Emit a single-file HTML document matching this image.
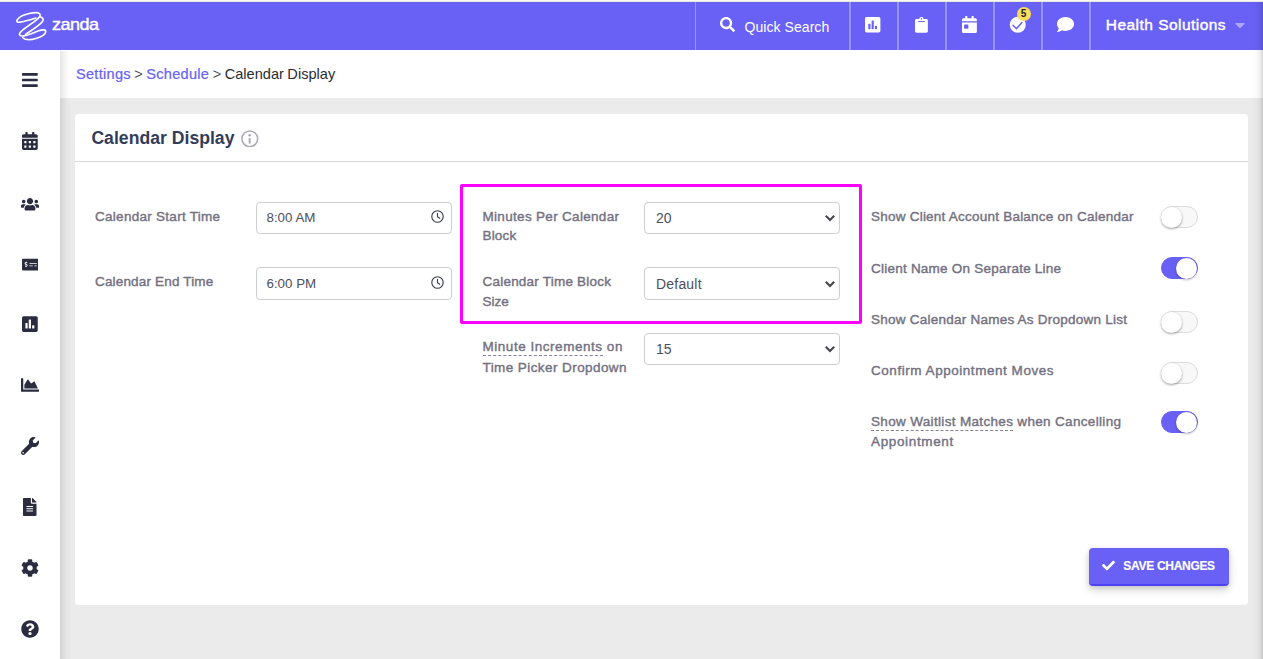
<!DOCTYPE html>
<html lang="en">
<head>
<meta charset="utf-8">
<title>Calendar Display - Zanda</title>
<style>
*{box-sizing:border-box;margin:0;padding:0}
html,body{width:1263px;height:659px;overflow:hidden}
body{position:relative;background:#ebebeb;font-family:"Liberation Sans",sans-serif;color:#6e6b7b}
.abs{position:absolute}
#topstrip{left:0;top:0;width:1263px;height:2px;background:linear-gradient(#fbfaf5 0,#fbfaf5 1px,#eae7db 1px,#eae7db 2px)}
#header{left:0;top:2px;width:1263px;height:48px;background:#6961f5}
.sep{top:0;width:1px;height:48px;background:rgba(255,255,255,.31)}
.hicon{fill:#fff}
#brand{left:52px;top:11.2px;font-size:17px;line-height:24px;color:#fff;letter-spacing:-.5px;-webkit-text-stroke:.4px #fff;transform:scaleX(1.06);transform-origin:0 0}
#qs{left:744.5px;top:14px;font-size:14px;line-height:22px;color:#fff;white-space:nowrap;letter-spacing:.06px}
#org{left:1105.8px;top:10.6px;font-size:15.5px;line-height:24px;font-weight:400;color:#fff;-webkit-text-stroke:.42px #fff;white-space:nowrap;letter-spacing:.46px}
#badge{left:1016.9px;top:4.9px;width:14.2px;height:14px;border-radius:50%;background:#fadd5a;color:#25253a;font-size:10px;font-weight:700;line-height:13.8px;text-align:center;padding-right:.9px}
#sidebar{left:0;top:50px;width:60px;height:609px;background:#fff}
.sicon{fill:#2b2c40}
#crumbbar{left:60px;top:50px;width:1203px;height:48px;background:#fff}
#crumb{left:76px;top:62px;font-size:14.6px;line-height:24px;color:#2b2b33;white-space:nowrap;letter-spacing:0;word-spacing:-.6px}
#crumb a{color:#6961f5;text-decoration:none;letter-spacing:.26px;-webkit-text-stroke:.22px #6961f5}
#crumb i{font-style:normal;color:#50505a}
#lshadow{left:60px;top:51px;width:10px;height:608px;background:linear-gradient(to right,rgba(0,0,0,.10),rgba(0,0,0,.03) 60%,rgba(0,0,0,0))}
#rshadow{left:1251px;top:2px;width:12px;height:657px;background:linear-gradient(to right,rgba(0,0,0,0),rgba(0,0,0,.02) 45%,rgba(0,0,0,.06) 75%,rgba(0,0,0,.16))}
#card{left:75px;top:114px;width:1173px;height:491px;background:#fff;border-radius:4px}
#cardline{left:75px;top:161px;width:1173px;height:1px;background:#d6d6de}
#title{left:91.4px;top:125px;font-size:17.6px;line-height:26px;font-weight:700;color:#323c5a;white-space:nowrap;letter-spacing:.02px}
.lbl{font-size:13.5px;line-height:19.5px;font-weight:400;color:#737181;-webkit-text-stroke:.4px #737181;white-space:nowrap}
.dash{border-bottom:1px dashed #858392;padding-bottom:1px}
.inp{height:32px;border:1px solid #cdcdd6;border-radius:4px;background:#fff}
.inptxt{font-size:13.33px;line-height:16px;color:#4b4f5e;white-space:nowrap}
.seltxt{font-size:14px;line-height:20px;color:#4b4f5e;white-space:nowrap}
.tog{width:37px;height:22px;border-radius:11px}
.tog.off{background:#f8f8f8;border:1px solid #dcdcdc}
.tog.on{background:#6961f5;border:1px solid #6961f5}
.knob{position:absolute;top:-.5px;width:21px;height:21px;border-radius:50%;background:#fff;box-shadow:0 1px 2.5px rgba(0,0,0,.38)}
.tog.off .knob{left:-.8px}
.tog.on .knob{right:-.3px;box-shadow:0 1px 2.5px rgba(0,0,0,.3)}
#hl{left:460px;top:184px;width:402px;height:140px;border:3px solid #ff00ff;border-radius:2px}
#save{left:1089px;top:548px;width:140px;height:38px;background:#6961f5;border-bottom:2px solid #4c42f2;border-radius:4px;box-shadow:0 4px 10px rgba(0,0,0,.16),0 2px 4px rgba(0,0,0,.10)}
#savetxt{left:1123.3px;top:557px;font-size:12px;line-height:18px;font-weight:700;color:#fff;-webkit-text-stroke:.15px #fff;white-space:nowrap;letter-spacing:-.3px}
</style>
</head>
<body>
<div id="topstrip" class="abs"></div>
<div id="header" class="abs">
  <svg class="abs" style="left:12px;top:5px" width="40" height="38" viewBox="12 7 40 38" fill="none" stroke="#fff" stroke-width="1.8" stroke-linecap="round" stroke-linejoin="round">
    <g transform="translate(31.5 26) scale(.94 .91) translate(-31.5 -25.5)"><path d="M36.1 16.8C32 18.2 25 20.4 19.5 21.3C16.5 21.8 15.2 20.6 16.2 18.8C18 15.8 24 13 29 11.8C33.5 10.7 38.5 10.2 40.2 12C41.8 13.8 39.5 16.5 36.5 19C31 23.5 23 28.5 20 32C17.8 34.6 18.3 36.4 21.5 36.5C26 36.6 33 33 39 30.8C43.5 29.2 46.8 29.3 46.6 31.8C46.3 34.6 42 37.3 37 39C32 40.7 25.5 41.6 22.1 38.4"/>
    <path d="M40.9 15.3C43.3 16.2 44.6 18 43.4 20.2C41.2 24.2 31.5 30.3 25.2 34.7"/></g>
  </svg>
  <div id="brand" class="abs">zanda</div>
  <div class="sep abs" style="left:695px"></div>
  <div class="sep abs" style="left:849px;width:2px"></div>
  <div class="sep abs" style="left:897px;width:2px"></div>
  <div class="sep abs" style="left:945px;width:2px"></div>
  <div class="sep abs" style="left:993px;width:2px"></div>
  <div class="sep abs" style="left:1041px;width:2px"></div>
  <div class="sep abs" style="left:1089px;width:2px"></div>
  <!-- search -->
  <svg class="abs hicon" style="left:720px;top:15px" width="15" height="15" viewBox="0 0 512 512"><path d="M505 442.700L405.300 343c-4.500-4.500-10.600-7-17-7H372c27.600-35.300 44-79.700 44-128C416 93.100 322.900 0 208 0S0 93.100 0 208s93.100 208 208 208c48.300 0 92.700-16.400 128-44v16.300c0 6.400 2.500 12.500 7 17l99.700 99.700c9.400 9.400 24.600 9.400 33.900 0l28.300-28.300c9.400-9.400 9.400-24.600.1-34zM208 336c-70.700 0-128-57.200-128-128 0-70.700 57.200-128 128-128 70.700 0 128 57.200 128 128 0 70.700-57.200 128-128 128z"/></svg>
  <div id="qs" class="abs">Quick Search</div>
  <!-- poll -->
  <svg class="abs hicon" style="left:865.3px;top:13.8px" width="15.4" height="17.5" preserveAspectRatio="none" viewBox="0 0 448 512"><path d="M400 32H48C21.500 32 0 53.500 0 80v352c0 26.500 21.500 48 48 48h352c26.500 0 48-21.500 48-48V80c0-26.500-21.500-48-48-48zM160 368c0 8.840-7.160 16-16 16h-32c-8.840 0-16-7.160-16-16V240c0-8.840 7.160-16 16-16h32c8.840 0 16 7.160 16 16v128zm96 0c0 8.840-7.160 16-16 16h-32c-8.840 0-16-7.160-16-16V144c0-8.840 7.160-16 16-16h32c8.840 0 16 7.160 16 16v224zm96 0c0 8.840-7.160 16-16 16h-32c-8.840 0-16-7.160-16-16v-64c0-8.840 7.160-16 16-16h32c8.840 0 16 7.160 16 16v64z"/></svg>
  <!-- clipboard -->
  <svg class="abs hicon" style="left:915.3px;top:15.1px" width="12.9" height="15.8" preserveAspectRatio="none" viewBox="0 0 384 512"><path d="M384 112v352c0 26.510-21.490 48-48 48H48c-26.510 0-48-21.490-48-48V112c0-26.510 21.490-48 48-48h80c0-35.290 28.710-64 64-64s64 28.710 64 64h80c26.510 0 48 21.490 48 48zM192 40c-13.255 0-24 10.745-24 24s10.745 24 24 24 24-10.745 24-24-10.745-24-24-24m96 114v-20a6 6 0 0 0-6-6H102a6 6 0 0 0-6 6v20a6 6 0 0 0 6 6h180a6 6 0 0 0 6-6z"/></svg>
  <!-- calendar-day -->
  <svg class="abs hicon" style="left:962px;top:14px" width="14.875" height="17" viewBox="0 0 448 512"><path d="M0 464c0 26.500 21.500 48 48 48h352c26.500 0 48-21.500 48-48V192H0v272zm64-192c0-8.800 7.200-16 16-16h96c8.800 0 16 7.200 16 16v96c0 8.800-7.200 16-16 16H80c-8.800 0-16-7.200-16-16v-96zM400 64h-48V16c0-8.800-7.200-16-16-16h-32c-8.800 0-16 7.200-16 16v48H160V16c0-8.800-7.200-16-16-16h-32c-8.800 0-16 7.200-16 16v48H48C21.500 64 0 85.500 0 112v48h448v-48c0-26.500-21.500-48-48-48z"/></svg>
  <!-- check-circle -->
  <svg class="abs" style="left:1008px;top:13px" width="20" height="20" viewBox="1008 15 20 20"><circle cx="1017.75" cy="24.85" r="8" fill="#fff"/><path d="M1013 25.300l3.400 3.400 5.500-6.200" fill="none" stroke="#6961f5" stroke-width="1.5" stroke-linecap="round" stroke-linejoin="round"/></svg>
  <div id="badge" class="abs">5</div>
  <!-- comment -->
  <svg class="abs hicon" style="left:1057px;top:14.3px" width="17" height="17" viewBox="0 0 512 512"><path d="M256 32C114.600 32 0 125.100 0 240c0 49.600 21.400 95 57 130.700C44.500 421.100 2.700 466 2.200 466.500c-2.200 2.300-2.800 5.700-1.500 8.700S4.800 480 8 480c66.300 0 116-31.800 140.600-51.400 32.700 12.300 69 19.400 107.400 19.400 141.400 0 256-93.100 256-208S397.400 32 256 32z"/></svg>
  <div id="org" class="abs">Health Solutions</div>
  <svg class="abs" style="left:1235px;top:15.3px" width="10" height="16" viewBox="0 0 320 512" fill="rgba(255,255,255,.45)"><path d="M31.300 192h257.300c17.800 0 26.700 21.500 14.100 34.100L174.100 354.800c-7.800 7.800-20.500 7.800-28.300 0L17.200 226.100C4.600 213.500 13.500 192 31.300 192z"/></svg>
</div>

<div id="sidebar" class="abs"></div>
<div id="crumbbar" class="abs"></div>
<div id="crumb" class="abs"><a>Settings</a> <i>&gt;</i> <a>Schedule</a> <i>&gt;</i> Calendar Display</div>
<div id="card" class="abs"></div>
<div id="cardline" class="abs"></div>
<div id="lshadow" class="abs"></div>
<div id="rshadow" class="abs"></div>
<!-- sidebar icons -->
<svg class="abs sicon" style="left:22.1px;top:71.3px" width="15.75" height="18" viewBox="0 0 448 512"><path d="M16 132h416c8.837 0 16-7.163 16-16V76c0-8.837-7.163-16-16-16H16C7.163 60 0 67.163 0 76v40c0 8.837 7.163 16 16 16zm0 160h416c8.837 0 16-7.163 16-16v-40c0-8.837-7.163-16-16-16H16c-8.837 0-16 7.163-16 16v40c0 8.837 7.163 16 16 16zm0 160h416c8.837 0 16-7.163 16-16v-40c0-8.837-7.163-16-16-16H16c-8.837 0-16 7.163-16 16v40c0 8.837 7.163 16 16 16z"/></svg>
<svg class="abs sicon" style="left:22.1px;top:132px" width="15.75" height="18" viewBox="0 0 448 512"><path d="M0 464c0 26.500 21.500 48 48 48h352c26.500 0 48-21.500 48-48V192H0v272zm320-196c0-6.600 5.400-12 12-12h40c6.600 0 12 5.400 12 12v40c0 6.600-5.400 12-12 12h-40c-6.600 0-12-5.400-12-12v-40zm0 128c0-6.600 5.400-12 12-12h40c6.600 0 12 5.400 12 12v40c0 6.600-5.400 12-12 12h-40c-6.600 0-12-5.400-12-12v-40zM192 268c0-6.600 5.400-12 12-12h40c6.600 0 12 5.400 12 12v40c0 6.600-5.400 12-12 12h-40c-6.600 0-12-5.400-12-12v-40zm0 128c0-6.600 5.400-12 12-12h40c6.600 0 12 5.400 12 12v40c0 6.600-5.400 12-12 12h-40c-6.600 0-12-5.400-12-12v-40zM64 268c0-6.600 5.400-12 12-12h40c6.600 0 12 5.400 12 12v40c0 6.600-5.400 12-12 12H76c-6.600 0-12-5.400-12-12v-40zm0 128c0-6.600 5.400-12 12-12h40c6.600 0 12 5.400 12 12v40c0 6.600-5.400 12-12 12H76c-6.600 0-12-5.400-12-12v-40zM400 64h-48V16c0-8.800-7.200-16-16-16h-32c-8.800 0-16 7.200-16 16v48H160V16c0-8.800-7.200-16-16-16h-32c-8.800 0-16 7.200-16 16v48H48C21.500 64 0 85.500 0 112v48h448v-48c0-26.500-21.500-48-48-48z"/></svg>
<svg class="abs sicon" style="left:21.3px;top:196.5px" width="18" height="14.4" viewBox="0 0 640 512"><path d="M96 224c35.300 0 64-28.700 64-64s-28.700-64-64-64-64 28.700-64 64 28.700 64 64 64zm448 0c35.300 0 64-28.700 64-64s-28.700-64-64-64-64 28.700-64 64 28.700 64 64 64zm32 32h-64c-17.600 0-33.500 7.100-45.100 18.600 40.300 22.100 68.900 62 75.100 109.400h66c17.700 0 32-14.300 32-32v-32c0-35.300-28.700-64-64-64zm-256 0c61.900 0 112-50.100 112-112S381.900 32 320 32 208 82.100 208 144s50.100 112 112 112zm76.800 32h-8.300c-20.800 10-43.900 16-68.500 16s-47.600-6-68.500-16h-8.300C179.600 288 128 339.600 128 403.200V432c0 26.500 21.500 48 48 48h288c26.500 0 48-21.500 48-48v-28.800c0-63.600-51.600-115.200-115.200-115.200zm-223.700-13.400C161.500 263.100 145.600 256 128 256H64c-35.300 0-64 28.700-64 64v32c0 17.700 14.300 32 32 32h65.900c6.300-47.400 34.900-87.300 75.200-109.400z"/></svg>
<svg class="abs sicon" style="left:21.7px;top:258.2px" width="16.6" height="13.28" viewBox="0 0 640 512"><path d="M608 32H32C14.330 32 0 46.330 0 64v384c0 17.670 14.330 32 32 32h576c17.670 0 32-14.330 32-32V64c0-17.670-14.330-32-32-32zM176 327.880V344c0 4.420-3.580 8-8 8h-16c-4.420 0-8-3.580-8-8v-16.290c-11.290-.58-22.270-4.520-31.370-11.350-3.900-2.930-4.100-8.770-.57-12.140l11.750-11.210c2.770-2.640 6.890-2.760 10.130-.73 3.870 2.420 8.260 3.720 12.820 3.720h28.110c6.500 0 11.800-5.920 11.800-13.190 0-5.950-3.610-11.190-8.770-12.730l-45-13.500c-18.590-5.580-31.580-23.420-31.580-43.390 0-24.520 19.050-44.440 42.670-45.070V152c0-4.420 3.580-8 8-8h16c4.420 0 8 3.580 8 8v16.290c11.290.58 22.270 4.510 31.370 11.350 3.900 2.930 4.100 8.770.57 12.140l-11.750 11.210c-2.770 2.640-6.890 2.760-10.130.73-3.870-2.430-8.260-3.720-12.820-3.720h-28.110c-6.500 0-11.800 5.920-11.800 13.190 0 5.950 3.610 11.190 8.770 12.730l45 13.500c18.590 5.580 31.580 23.420 31.580 43.390 0 24.530-19.050 44.440-42.670 45.070zM416 312c0 4.420-3.580 8-8 8H296c-4.420 0-8-3.580-8-8v-16c0-4.420 3.580-8 8-8h112c4.420 0 8 3.580 8 8v16zm160 0c0 4.420-3.580 8-8 8h-80c-4.420 0-8-3.580-8-8v-16c0-4.420 3.580-8 8-8h80c4.420 0 8 3.580 8 8v16zm0-96c0 4.420-3.580 8-8 8H296c-4.420 0-8-3.580-8-8v-16c0-4.420 3.580-8 8-8h272c4.420 0 8 3.580 8 8v16z"/></svg>
<svg class="abs sicon" style="left:21.9px;top:314.6px" width="15.75" height="18" viewBox="0 0 448 512"><path d="M400 32H48C21.500 32 0 53.500 0 80v352c0 26.500 21.500 48 48 48h352c26.500 0 48-21.500 48-48V80c0-26.500-21.500-48-48-48zM160 368c0 8.840-7.160 16-16 16h-32c-8.840 0-16-7.160-16-16V240c0-8.840 7.160-16 16-16h32c8.840 0 16 7.160 16 16v128zm96 0c0 8.840-7.160 16-16 16h-32c-8.840 0-16-7.160-16-16V144c0-8.840 7.160-16 16-16h32c8.840 0 16 7.160 16 16v224zm96 0c0 8.840-7.160 16-16 16h-32c-8.840 0-16-7.160-16-16v-64c0-8.840 7.160-16 16-16h32c8.840 0 16 7.160 16 16v64z"/></svg>
<svg class="abs sicon" style="left:21px;top:375.9px" width="18" height="18" viewBox="0 0 512 512"><path d="M500 384c6.600 0 12 5.400 12 12v40c0 6.600-5.400 12-12 12H12c-6.600 0-12-5.400-12-12V76c0-6.600 5.400-12 12-12h40c6.600 0 12 5.400 12 12v308h436zM372.700 159.500L288 216l-85.300-113.700c-5.100-6.800-15.500-6.300-19.900 1L96 248v104h384l-89.900-187.800c-3.200-6.500-11.400-8.700-17.400-4.700z"/></svg>
<svg class="abs sicon" style="left:21px;top:436.8px" width="18" height="18" viewBox="0 0 512 512"><path d="M507.730 109.100c-2.240-9.030-13.540-12.090-20.120-5.510l-74.360 74.360-67.880-11.310-11.310-67.880 74.360-74.360c6.620-6.620 3.430-17.900-5.660-20.160-47.380-11.740-99.550.91-136.580 37.930-39.640 39.640-50.550 97.100-34.050 147.200L18.740 402.760c-24.990 24.990-24.990 65.510 0 90.500 24.990 24.990 65.510 24.990 90.500 0l213.210-213.210c50.120 16.710 107.470 5.680 147.370-34.220 37.070-37.070 49.700-89.320 37.910-136.730zM64 472c-13.250 0-24-10.750-24-24 0-13.260 10.750-24 24-24s24 10.740 24 24c0 13.250-10.750 24-24 24z"/></svg>
<svg class="abs sicon" style="left:23.4px;top:497.8px" width="13.5" height="18" viewBox="0 0 384 512"><path d="M224 136V0H24C10.700 0 0 10.700 0 24v464c0 13.300 10.700 24 24 24h336c13.300 0 24-10.700 24-24V160H248c-13.200 0-24-10.800-24-24zm64 236c0 6.600-5.400 12-12 12H108c-6.600 0-12-5.400-12-12v-8c0-6.600 5.400-12 12-12h168c6.600 0 12 5.400 12 12v8zm0-64c0 6.600-5.400 12-12 12H108c-6.600 0-12-5.400-12-12v-8c0-6.600 5.400-12 12-12h168c6.600 0 12 5.400 12 12v8zm0-72v8c0 6.600-5.400 12-12 12H108c-6.600 0-12-5.400-12-12v-8c0-6.600 5.400-12 12-12h168c6.600 0 12 5.400 12 12zm96-114.100v6.100H256V0h6.100c6.400 0 12.500 2.500 17 7l97.900 98c4.500 4.500 7 10.600 7 16.900z"/></svg>
<svg class="abs sicon" style="left:21px;top:559px" width="18" height="18" viewBox="0 0 512 512"><path d="M487.400 315.700l-42.600-24.600c4.300-23.200 4.300-47 0-70.200l42.600-24.600c4.900-2.800 7.100-8.600 5.500-14-11.100-35.600-30-67.800-54.700-94.600-3.800-4.100-10-5.100-14.800-2.300L380.800 110c-17.900-15.400-38.500-27.300-60.800-35.100V25.800c0-5.600-3.900-10.500-9.400-11.700-36.700-8.200-74.300-7.800-109.200 0-5.500 1.200-9.400 6.100-9.400 11.700V75c-22.200 7.900-42.800 19.800-60.800 35.100L88.700 85.500c-4.900-2.800-11-1.900-14.800 2.300-24.700 26.700-43.600 58.900-54.700 94.600-1.700 5.400.6 11.200 5.500 14L67.300 221c-4.300 23.200-4.300 47 0 70.200l-42.600 24.600c-4.900 2.800-7.100 8.600-5.500 14 11.100 35.600 30 67.800 54.700 94.600 3.800 4.100 10 5.100 14.800 2.300l42.600-24.600c17.900 15.400 38.500 27.300 60.800 35.100v49.200c0 5.600 3.900 10.500 9.400 11.700 36.700 8.200 74.300 7.800 109.200 0 5.500-1.200 9.400-6.100 9.400-11.700v-49.200c22.200-7.900 42.800-19.800 60.800-35.100l42.600 24.600c4.900 2.800 11 1.900 14.800-2.300 24.700-26.700 43.600-58.900 54.700-94.600 1.500-5.500-.7-11.300-5.600-14.100zM256 336c-44.100 0-80-35.900-80-80s35.900-80 80-80 80 35.900 80 80-35.900 80-80 80z"/></svg>
<svg class="abs sicon" style="left:21px;top:619.9px" width="18" height="18" viewBox="0 0 512 512"><path d="M504 256c0 136.997-111.043 248-248 248S8 392.997 8 256C8 119.083 119.043 8 256 8s248 111.083 248 248zM262.655 90c-54.497 0-89.255 22.957-116.549 63.758-3.536 5.286-2.353 12.415 2.715 16.258l34.699 26.310c5.205 3.947 12.621 3.008 16.665-2.122 17.864-22.658 30.113-35.797 57.303-35.797 20.429 0 45.698 13.148 45.698 32.958 0 14.976-12.363 22.667-32.534 33.976C247.128 238.528 216 254.941 216 296v4c0 6.627 5.373 12 12 12h56c6.627 0 12-5.373 12-12v-1.333c0-28.462 83.186-29.647 83.186-106.667 0-58.002-60.165-102-116.531-102zM256 338c-25.365 0-46 20.635-46 46 0 25.364 20.635 46 46 46s46-20.636 46-46c0-25.365-20.635-46-46-46z"/></svg>

<!-- card content -->
<div id="title" class="abs">Calendar Display</div>
<svg class="abs" style="left:241px;top:129.5px" width="17.6" height="17.6" viewBox="0 0 17.6 17.6" fill="none"><circle cx="8.8" cy="8.8" r="7.9" stroke="#a9a9b5" stroke-width="1.5"/><circle cx="8.7" cy="5.3" r="1.3" fill="#a9a9b5"/><path d="M8.7 8.100v5.500" stroke="#a9a9b5" stroke-width="2"/></svg>

<div class="abs lbl" style="left:95px;top:206.5px;letter-spacing:.28px">Calendar Start Time</div>
<div class="abs lbl" style="left:95px;top:272px;letter-spacing:.17px">Calendar End Time</div>
<div class="abs inp" style="left:256px;top:202px;width:196px"></div>
<div class="abs inp" style="left:256px;top:267px;width:196px;height:33px"></div>
<div class="abs inptxt" style="left:266.5px;top:209.5px">8:00 AM</div>
<div class="abs inptxt" style="left:266.5px;top:275.5px">6:00 PM</div>
<svg class="abs" style="left:430.9px;top:210.2px" width="13" height="13" viewBox="0 0 13 13" fill="none" stroke="#3a3d4e" stroke-width="1.14" stroke-linecap="round" stroke-linejoin="round"><circle cx="6.5" cy="6.5" r="5.7"/><path d="M6.5 3.300v3.500l2.200 1.500"/></svg>
<svg class="abs" style="left:430.9px;top:276px" width="13" height="13" viewBox="0 0 13 13" fill="none" stroke="#3a3d4e" stroke-width="1.14" stroke-linecap="round" stroke-linejoin="round"><circle cx="6.5" cy="6.5" r="5.7"/><path d="M6.5 3.300v3.500l2.200 1.500"/></svg>

<div class="abs lbl" style="left:482.5px;top:206.5px"><span style="letter-spacing:.31px">Minutes Per Calendar</span><br><span style="letter-spacing:.16px">Block</span></div>
<div class="abs lbl" style="left:482.5px;top:272px"><span style="letter-spacing:.22px">Calendar Time Block</span><br>Size</div>
<div class="abs lbl" style="left:482.5px;top:337.4px;line-height:20.5px"><span style="letter-spacing:.53px"><span class="dash">Minute Increments</span> on</span><br><span style="letter-spacing:.42px">Time Picker Dropdown</span></div>
<div class="abs inp" style="left:644px;top:202px;width:196px"></div>
<div class="abs inp" style="left:644px;top:267px;width:196px;height:33px"></div>
<div class="abs inp" style="left:644px;top:333px;width:196px"></div>
<div class="abs seltxt" style="left:656px;top:207.5px">20</div>
<div class="abs seltxt" style="left:656px;top:273.7px;letter-spacing:.2px">Default</div>
<div class="abs seltxt" style="left:656px;top:338.5px">15</div>
<svg class="abs" style="left:824px;top:214px" width="12" height="9" viewBox="0 0 12 9" fill="none" stroke="#464650" stroke-width="2.1"><path d="M1.8 1.8L6 6l4.200-4.200"/></svg>
<svg class="abs" style="left:824px;top:279.500px" width="12" height="9" viewBox="0 0 12 9" fill="none" stroke="#464650" stroke-width="2.1"><path d="M1.8 1.8L6 6l4.200-4.200"/></svg>
<svg class="abs" style="left:824px;top:345px" width="12" height="9" viewBox="0 0 12 9" fill="none" stroke="#464650" stroke-width="2.1"><path d="M1.8 1.8L6 6l4.200-4.200"/></svg>

<div class="abs lbl" style="left:871px;top:206.5px;letter-spacing:.23px">Show Client Account Balance on Calendar</div>
<div class="abs lbl" style="left:871px;top:258.500px;letter-spacing:.23px">Client Name On Separate Line</div>
<div class="abs lbl" style="left:871px;top:309.500px;letter-spacing:.24px">Show Calendar Names As Dropdown List</div>
<div class="abs lbl" style="left:871px;top:360.500px;letter-spacing:.54px">Confirm Appointment Moves</div>
<div class="abs lbl" style="left:871px;top:412px;line-height:20.2px"><span style="letter-spacing:.33px"><span class="dash">Show Waitlist Matches</span> when Cancelling</span><br><span style="letter-spacing:.64px">Appointment</span></div>
<div class="abs tog off" style="left:1161px;top:206px"><div class="knob"></div></div>
<div class="abs tog on" style="left:1161px;top:257px"><div class="knob"></div></div>
<div class="abs tog off" style="left:1161px;top:311px"><div class="knob"></div></div>
<div class="abs tog off" style="left:1161px;top:362px"><div class="knob"></div></div>
<div class="abs tog on" style="left:1161px;top:411px"><div class="knob"></div></div>

<div id="hl" class="abs"></div>

<div id="save" class="abs"></div>
<svg class="abs" style="left:1102px;top:559px" width="13" height="13" viewBox="0 0 512 512" fill="#fff"><path d="M173.898 439.404l-166.400-166.400c-9.997-9.997-9.997-26.206 0-36.204l36.203-36.204c9.997-9.998 26.207-9.998 36.204 0L192 312.690 432.095 72.596c9.997-9.997 26.207-9.997 36.204 0l36.203 36.204c9.997 9.997 9.997 26.206 0 36.204l-294.400 294.401c-9.998 9.997-26.207 9.997-36.204-.001z"/></svg>
<div id="savetxt" class="abs">SAVE CHANGES</div>

</body>
</html>
